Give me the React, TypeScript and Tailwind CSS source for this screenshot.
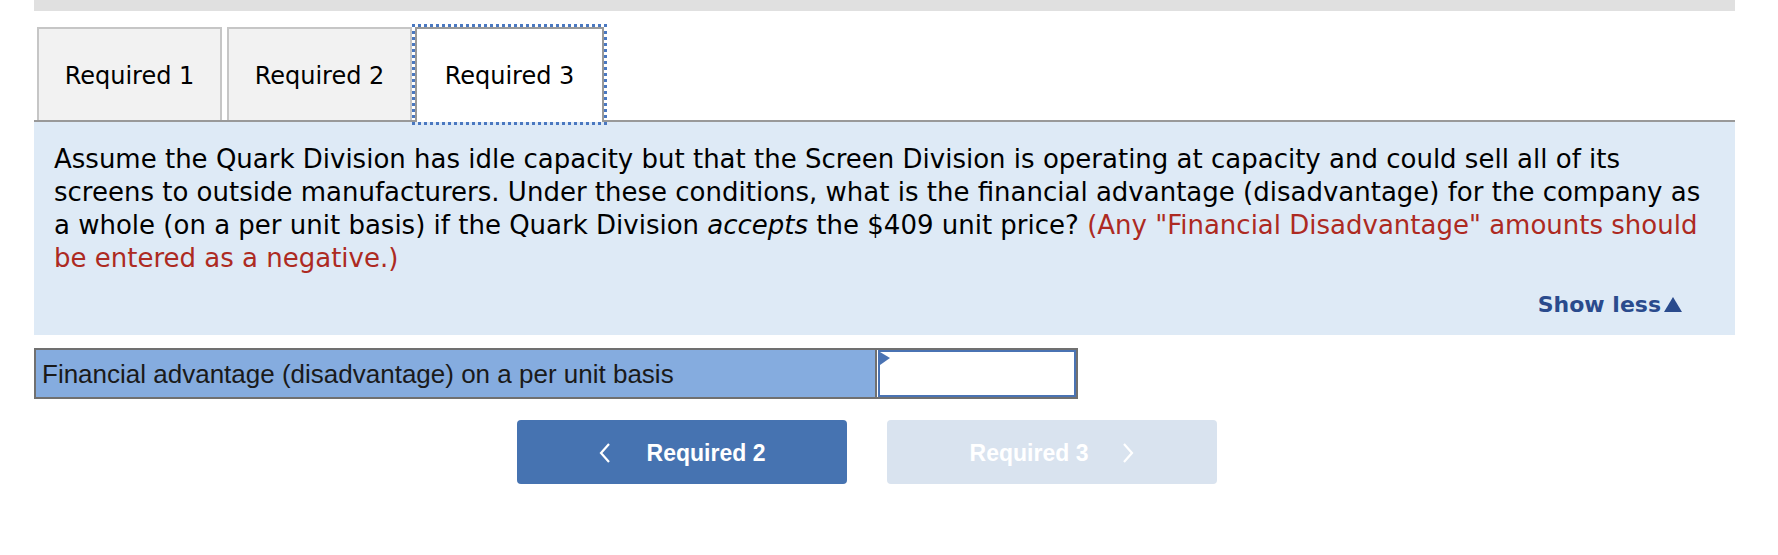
import React from "react";

export default function App() {
  const verdana = { fontFamily: "'DejaVu Sans', Verdana, sans-serif" };
  return (
    <div className="min-h-[555px] w-[1778px] bg-white">
      <div className="ml-[34px] w-[1701px]" style={verdana}>
        <div className="h-[11px] bg-[#e0e0e0]" />
        <div className="mt-[16px] flex items-end gap-[5px] border-b-2 border-[#999999] pl-[3px]">
          <div className="flex h-[93px] w-[185px] items-center justify-center border-2 border-b-0 border-[#c6c6c6] bg-[#f2f2f2] pt-[2px] text-[24px] text-black">
            Required 1
          </div>
          <div className="flex h-[93px] w-[185px] items-center justify-center border-2 border-b-0 border-[#c6c6c6] bg-[#f2f2f2] pt-[2px] text-[24px] text-black">
            Required 2
          </div>
          <div className="relative z-10 -mb-[2px] -ml-[2px] flex h-[95px] w-[189px] items-center justify-center border-2 border-b-0 border-[#999999] bg-white text-[24px] text-black outline-[3px] outline-offset-[0px] outline-dotted outline-[#4a78c0]">
            Required 3
          </div>
        </div>
        <div className="bg-[#deeaf6] pt-[21px] pb-[17px]">
          <p className="px-[20px] text-[26px] leading-[33px] whitespace-nowrap text-black">
            Assume the Quark Division has idle capacity but that the Screen Division is operating at capacity and could sell all of its
            <br />
            screens to outside manufacturers. Under these conditions, what is the financial advantage (disadvantage) for the company as
            <br />
            a whole (on a per unit basis) if the Quark Division <i>accepts</i> the $409 unit price?{" "}
            <span className="text-[#ad2a22]">(Any "Financial Disadvantage" amounts should</span>
            <br />
            <span className="text-[#ad2a22]">be entered as a negative.)</span>
          </p>
          <div className="mt-[15px] flex h-[28px] items-center justify-end pr-[52px]">
            <span className="text-[22px] font-bold text-[#2a4b8d]">Show less</span>
            <svg width="20" height="17" viewBox="0 0 20 17" className="ml-[2px]">
              <polygon points="10,1 19,16 1,16" fill="#2a4b8d" />
            </svg>
          </div>
        </div>
        <div className="mt-[13px] flex h-[51px] w-[1044px] border-2 border-[#707070]">
          <div
            className="flex w-[841px] items-center border-r-2 border-[#707070] bg-[#85acdf] pl-[6px] pt-[2px] text-[26px] text-[#1a1a1a]"
            style={{ fontFamily: "'Liberation Sans', Arial, sans-serif" }}
          >
            Financial advantage (disadvantage) on a per unit basis
          </div>
          <div className="relative ml-[1px] flex-1 border-2 border-[#4a73b3] bg-white">
            <svg width="10" height="14" viewBox="0 0 10 14" className="absolute left-0 top-0">
              <polygon points="0,0 10,6 0,13" fill="#4a73b3" />
            </svg>
          </div>
        </div>
        <div
          className="mt-[21px] flex gap-[40px] pl-[483px]"
          style={{ fontFamily: "'Liberation Sans', Arial, sans-serif" }}
        >
          <div className="flex h-[64px] w-[330px] items-center justify-center gap-[36px] rounded-[4px] bg-[#4673b1] pt-[2px] text-[23px] font-bold text-white">
            <svg width="12" height="22" viewBox="0 0 12 22">
              <polyline points="10,2 2,11 10,20" fill="none" stroke="white" strokeWidth="2.2" />
            </svg>
            <span>Required 2</span>
          </div>
          <div className="flex h-[64px] w-[330px] items-center justify-center gap-[34px] rounded-[4px] bg-[#d9e3ef] pt-[2px] text-[23px] font-bold text-white">
            <span>Required 3</span>
            <svg width="12" height="22" viewBox="0 0 12 22">
              <polyline points="2,2 10,11 2,20" fill="none" stroke="white" strokeWidth="2.2" />
            </svg>
          </div>
        </div>
      </div>
    </div>
  );
}
